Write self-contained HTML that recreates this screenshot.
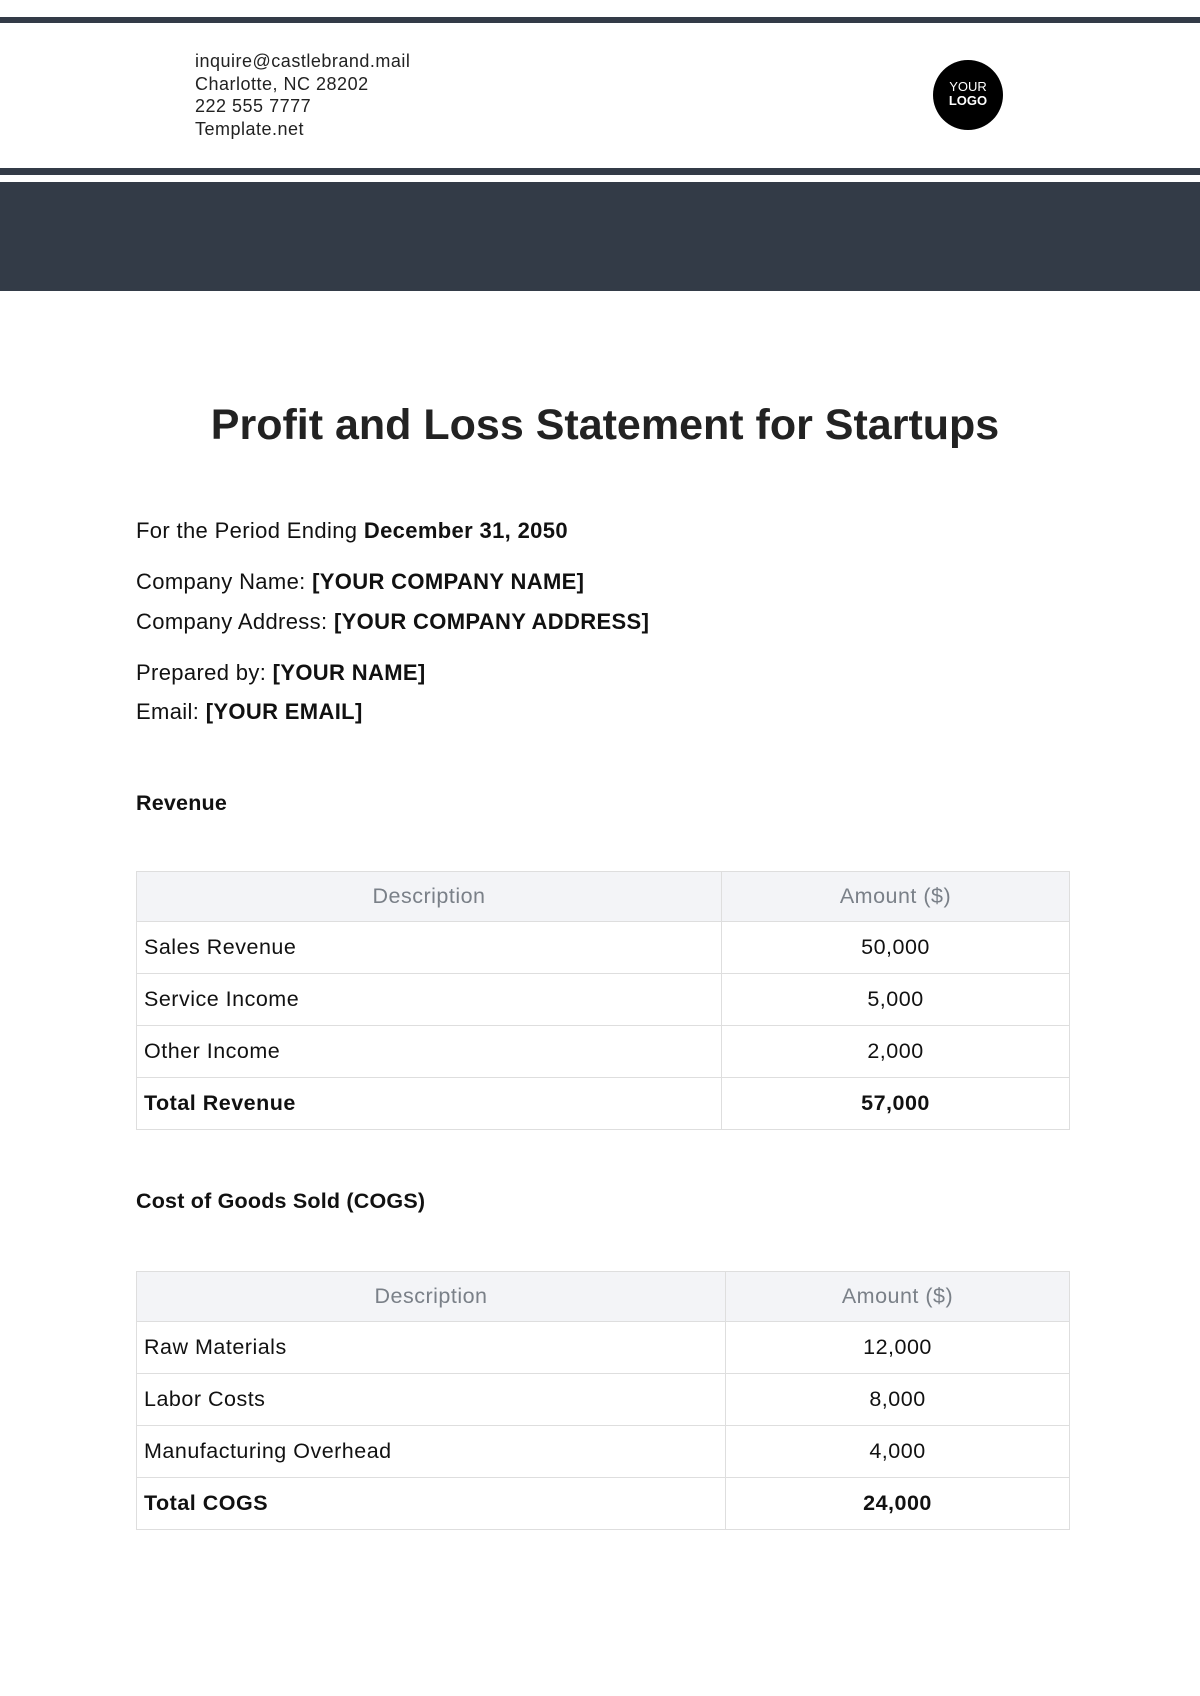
<!DOCTYPE html>
<html><head><meta charset="utf-8"><style>
*{margin:0;padding:0;box-sizing:border-box}
body{width:1200px;height:1696px;background:#fff;font-family:"Liberation Sans",sans-serif;color:#111;position:relative;overflow:hidden}
.abs{position:absolute}
.bar{position:absolute;left:0;width:1200px;background:#333b47}
.contact{left:195px;top:50px;font-size:18px;line-height:22.5px;color:#222;letter-spacing:0.5px}
.logo{left:933px;top:60px;width:70px;height:70px;border-radius:50%;background:#000;color:#fff;text-align:center;font-size:13px;line-height:14px;padding-top:20px}
h1{position:absolute;left:0;width:1210px;text-align:center;top:401px;font-size:43px;font-weight:bold;color:#222}
.t{position:absolute;left:136px;font-size:22px;letter-spacing:0.35px}
.h{position:absolute;left:136px;font-size:21.5px;font-weight:bold;letter-spacing:0.2px}
table{position:absolute;left:136px;border-collapse:collapse;font-size:21.5px;letter-spacing:0.5px}
td{border:1px solid #dedede;height:52px;padding:0 7px}
tr.hd td{background:#f3f4f7;color:#7a8088;text-align:center;height:50px}
td.a{text-align:center}
tr.b td{font-weight:bold}
</style></head><body>
<div class="bar" style="top:17px;height:6px"></div>
<div class="bar" style="top:168px;height:7px"></div>
<div class="bar" style="top:182px;height:109px"></div>
<div class="abs contact">inquire@castlebrand.mail<br>Charlotte, NC 28202<br>222 555 7777<br>Template.net</div>
<div class="abs logo">YOUR<br><b>LOGO</b></div>
<h1>Profit and Loss Statement for Startups</h1>
<div class="t" style="top:518px">For the Period Ending <b>December 31, 2050</b></div>
<div class="t" style="top:569px">Company Name: <b>[YOUR COMPANY NAME]</b></div>
<div class="t" style="top:609px">Company Address: <b>[YOUR COMPANY ADDRESS]</b></div>
<div class="t" style="top:660px">Prepared by: <b>[YOUR NAME]</b></div>
<div class="t" style="top:699px">Email: <b>[YOUR EMAIL]</b></div>
<div class="h" style="top:791px">Revenue</div>
<table style="top:871px;width:934px">
<tr class="hd"><td style="width:585px">Description</td><td>Amount ($)</td></tr>
<tr><td>Sales Revenue</td><td class="a">50,000</td></tr>
<tr><td>Service Income</td><td class="a">5,000</td></tr>
<tr><td>Other Income</td><td class="a">2,000</td></tr>
<tr class="b"><td>Total Revenue</td><td class="a">57,000</td></tr>
</table>
<div class="h" style="top:1189px">Cost of Goods Sold (COGS)</div>
<table style="top:1271px;width:934px">
<tr class="hd"><td style="width:589px">Description</td><td>Amount ($)</td></tr>
<tr><td>Raw Materials</td><td class="a">12,000</td></tr>
<tr><td>Labor Costs</td><td class="a">8,000</td></tr>
<tr><td>Manufacturing Overhead</td><td class="a">4,000</td></tr>
<tr class="b"><td>Total COGS</td><td class="a">24,000</td></tr>
</table>
</body></html>
